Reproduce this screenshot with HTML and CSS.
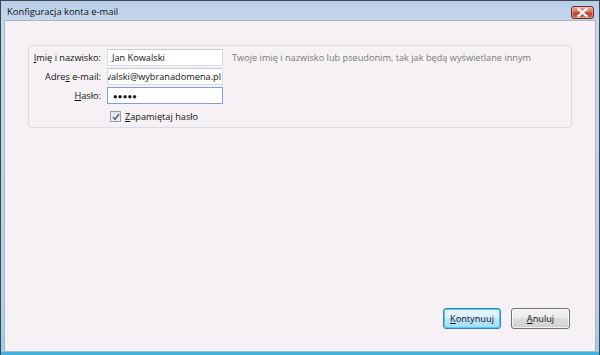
FILE: index.html
```html
<!DOCTYPE html>
<html lang="pl">
<head>
<meta charset="utf-8">
<title>Konfiguracja konta e-mail</title>
<link rel="stylesheet" href="styles.css">
</head>
<body>
<div class="window">
  <div class="titlebar">
    <span class="title">Konfiguracja konta e-mail</span>
    <span class="close">
      <svg width="11" height="9" viewBox="0 0 11 9"><path d="M1.5 1 L9.5 8 M9.5 1 L1.5 8" stroke="#fff" stroke-width="2.2" stroke-linecap="square"/></svg>
    </span>
  </div>
  <div class="content">
    <div class="group">
      <div class="form">
        <label class="label"><u>I</u>mię i nazwisko:</label>
        <div class="input"><span class="val">Jan Kowalski</span></div>
        <span class="hint">Twoje imię i nazwisko lub pseudonim, tak jak będą wyświetlane innym</span>

        <label class="label">Adre<u>s</u> e-mail:</label>
        <div class="input scrolled"><span class="val">valski@wybranadomena.pl</span></div>
        <span></span>

        <label class="label"><u>H</u>asło:</label>
        <div class="input focused"><span class="dots">●●●●●</span></div>
        <span></span>

        <span></span>
        <div class="check-row">
          <span class="checkbox">
            <svg width="8" height="8" viewBox="0 0 8 8"><path d="M1 4 L3 6.5 L7 1" fill="none" stroke="#4d6284" stroke-width="1.4"/></svg>
          </span>
          <span class="check-label"><u>Z</u>apamiętaj hasło</span>
        </div>
        <span></span>
      </div>
    </div>
    <div class="buttons">
      <button class="btn default"><u>K</u>ontynuuj</button>
      <button class="btn"><u>A</u>nuluj</button>
    </div>
  </div>
</div>
</body>
</html>
```

FILE: styles.css
```css
* { box-sizing: border-box; }
html, body { margin: 0; padding: 0; }
body {
  width: 600px;
  height: 355px;
  overflow: hidden;
  font-family: "Open Sans", "Noto Sans", sans-serif;
  font-size: 9.2px;
  color: #111;
}
.window {
  width: 600px;
  height: 355px;
  border: 1px solid #3c4552;
  border-bottom: none;
  background: linear-gradient(#b8cde6 0px, #c6d8ee 20px, #b9d0e8 300px, #9ccbe6 100%);
  display: flex;
  flex-direction: column;
  box-shadow: inset 0 -3px 0 #3fb3dc;
}
.titlebar {
  height: 19px;
  display: flex;
  align-items: center;
  justify-content: space-between;
  padding: 0 5px 0 6px;
}
.title {
  font-size: 9.4px;
  color: #111;
  line-height: 1;
  padding-top: 2px;
}
.close {
  width: 23px;
  height: 13px;
  margin-top: 3px;
  border: 1px solid #6b2a22;
  border-radius: 3px;
  background: linear-gradient(#e6a898 0%, #d7705c 45%, #c0402a 55%, #d1694f 100%);
  display: flex;
  align-items: center;
  justify-content: center;
  box-shadow: inset 0 0 0 1px rgba(255,255,255,0.35);
}
.content {
  flex: 1;
  margin: 0 3px 3px 3px;
  background: #f6f1f5;
  border: 1px solid #a9b8c8;
  display: flex;
  flex-direction: column;
  padding: 24px 23px 22px 23px;
}
.group {
  border: 1px solid #dcdde4;
  border-radius: 3px;
  padding: 3px 0 6px 0;
  height: 83px;
}
.form {
  display: grid;
  grid-template-columns: 72px 116px 1fr;
  column-gap: 6px;
  row-gap: 2px;
  align-items: center;
  grid-auto-rows: 17px;
}
.label {
  text-align: right;
  white-space: nowrap;
}
.input {
  height: 17px;
  border: 1px solid #d8dbe2;
  border-top-color: #c9ccd4;
  background: #fff;
  display: flex;
  align-items: center;
  padding: 0 4px;
  overflow: hidden;
  white-space: nowrap;
}
.input.scrolled {
  justify-content: flex-end;
  padding: 0 1px 0 0;
}
.input.focused {
  border-color: #7da2ce;
}
.dots {
  font-size: 7.5px;
  letter-spacing: 0.3px;
  color: #111;
  padding-left: 1px;
}
.hint {
  color: #7a7a7a;
  white-space: nowrap;
  padding-left: 3px;
}
.check-row {
  display: flex;
  align-items: center;
  gap: 4px;
  padding-left: 3px;
  margin-top: 4px;
}
.checkbox {
  width: 11px;
  height: 11px;
  border: 1px solid #9a9ea6;
  background: linear-gradient(#e2e3e7, #f4f4f6);
  display: flex;
  align-items: center;
  justify-content: center;
}
.buttons {
  margin-top: auto;
  display: flex;
  justify-content: flex-end;
  gap: 10px;
  padding-right: 2px;
}
.btn {
  font-family: inherit;
  font-size: 9.2px;
  color: #111;
  width: 59px;
  height: 21px;
  padding: 0;
  border: 1px solid #707070;
  border-radius: 3px;
  background: linear-gradient(#f2f2f2 0%, #ebebeb 50%, #dddddd 50%, #cfcfcf 100%);
  box-shadow: inset 0 0 0 1px rgba(255,255,255,0.7);
}
.btn.default {
  width: 58px;
  border-color: #3c7fb1;
  box-shadow: inset 0 0 0 1px #48d0f8;
  background: linear-gradient(#eaf6fd 0%, #d9f0fc 50%, #bee6fd 50%, #a7d9f5 100%);
}
u { text-decoration: underline; text-underline-offset: 1px; }
```
